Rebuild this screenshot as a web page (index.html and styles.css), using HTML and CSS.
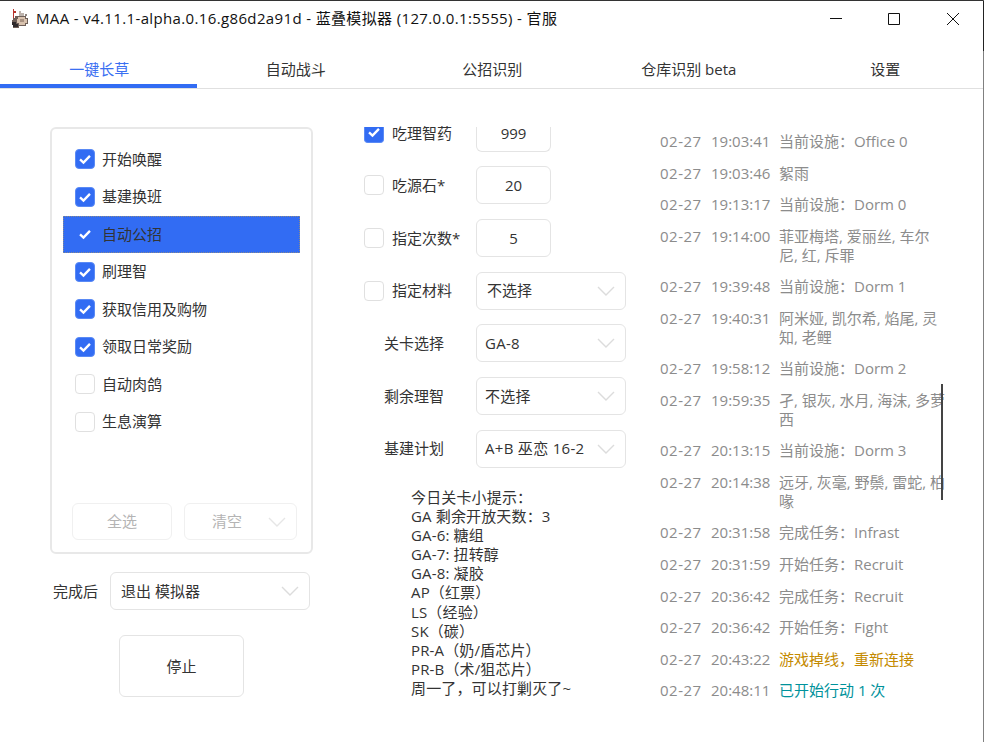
FILE: index.html
```html
<!DOCTYPE html>
<html lang="zh">
<head>
    <meta charset="UTF-8">
    <meta name="viewport" content="width=device-width, initial-scale=1.0">
    <title>MAA</title>
    <link rel="stylesheet" href="styles.css">
</head>
<body>
    <div class="window">
        <header class="titlebar">
            <svg class="app-icon" width="20" height="20" viewBox="0 0 20 20" shape-rendering="crispEdges">
                <path d="M5 8h11v2h2v6h-2v2H9v2H3v-4H2v-4h1v-2h2z" fill="#6e5f58"/>
                <path d="M8 9h7v2h2v4h-2v2H9v-2H7v-4h1z" fill="#d8c2ae"/>
                <path d="M10 11h4v3h-4z" fill="#a89282"/>
                <path d="M3 1h1v2h2v2H4v5H3z" fill="#b8352e"/>
                <path d="M9 3h2v2h3v3H9z" fill="#bdb3ac"/>
                <path d="M2 14h4v2h2v3H3v-2H2z" fill="#2f2a2c"/>
                <path d="M15 6h2v2h-2z" fill="#8f8580"/>
            </svg>
            <span class="app-title">MAA - v4.11.1-alpha.0.16.g86d2a91d - 蓝叠模拟器 (127.0.0.1:5555) - 官服</span>
            <div class="win-buttons">
                <svg width="12" height="12" viewBox="0 0 12 12"><path d="M0 5.5h12" stroke="#111" fill="none"/></svg>
                <svg width="12" height="12" viewBox="0 0 12 12"><path d="M.5.5h11v11H.5z" stroke="#111" fill="none"/></svg>
                <svg width="13" height="12" viewBox="0 0 13 12"><path d="M1 0l12 12M13 0L1 12" stroke="#111" fill="none"/></svg>
            </div>
        </header>

        <nav class="tabs">
            <a class="tab active">一键长草</a>
            <a class="tab">自动战斗</a>
            <a class="tab">公招识别</a>
            <a class="tab">仓库识别 beta</a>
            <a class="tab">设置</a>
        </nav>

        <main class="content">
            <section class="left">
                <div class="task-box">
                    <ul class="task-list">
                        <li class="task"><span class="check on"><svg viewBox="0 0 20 20"><path d="M4.5 10.5l3.8 3.5 7.2-7.5"/></svg></span>开始唤醒</li>
                        <li class="task"><span class="check on"><svg viewBox="0 0 20 20"><path d="M4.5 10.5l3.8 3.5 7.2-7.5"/></svg></span>基建换班</li>
                        <li class="task selected"><span class="check on"><svg viewBox="0 0 20 20"><path d="M4.5 10.5l3.8 3.5 7.2-7.5"/></svg></span>自动公招</li>
                        <li class="task"><span class="check on"><svg viewBox="0 0 20 20"><path d="M4.5 10.5l3.8 3.5 7.2-7.5"/></svg></span>刷理智</li>
                        <li class="task"><span class="check on"><svg viewBox="0 0 20 20"><path d="M4.5 10.5l3.8 3.5 7.2-7.5"/></svg></span>获取信用及购物</li>
                        <li class="task"><span class="check on"><svg viewBox="0 0 20 20"><path d="M4.5 10.5l3.8 3.5 7.2-7.5"/></svg></span>领取日常奖励</li>
                        <li class="task"><span class="check"></span>自动肉鸽</li>
                        <li class="task"><span class="check"></span>生息演算</li>
                    </ul>
                    <div class="task-actions">
                        <button class="btn-disabled select-all">全选</button>
                        <button class="btn-disabled clear">清空<svg class="chevron" viewBox="0 0 18 10"><path d="M1 1l8 8 8-8"/></svg></button>
                    </div>
                </div>
                <div class="after-row">
                    <span>完成后</span>
                    <div class="select after-select">退出 模拟器<svg class="chevron" viewBox="0 0 18 10"><path d="M1 1l8 8 8-8"/></svg></div>
                </div>
                <button class="stop">停止</button>
            </section>

            <section class="middle">
                <div class="option-list">
                    <div class="option first">
                        <span class="check on"><svg viewBox="0 0 20 20"><path d="M4.5 10.5l3.8 3.5 7.2-7.5"/></svg></span>
                        <span class="option-label">吃理智药</span>
                        <div class="input">999</div>
                    </div>
                    <div class="option">
                        <span class="check"></span>
                        <span class="option-label">吃源石*</span>
                        <div class="input">20</div>
                    </div>
                    <div class="option">
                        <span class="check"></span>
                        <span class="option-label">指定次数*</span>
                        <div class="input">5</div>
                    </div>
                    <div class="option">
                        <span class="check"></span>
                        <span class="option-label">指定材料</span>
                        <div class="select">不选择<svg class="chevron" viewBox="0 0 18 10"><path d="M1 1l8 8 8-8"/></svg></div>
                    </div>
                    <div class="option plain">
                        <span class="option-label">关卡选择</span>
                        <div class="select">GA-8<svg class="chevron" viewBox="0 0 18 10"><path d="M1 1l8 8 8-8"/></svg></div>
                    </div>
                    <div class="option plain">
                        <span class="option-label">剩余理智</span>
                        <div class="select">不选择<svg class="chevron" viewBox="0 0 18 10"><path d="M1 1l8 8 8-8"/></svg></div>
                    </div>
                    <div class="option plain">
                        <span class="option-label">基建计划</span>
                        <div class="select">A+B 巫恋 16-2<svg class="chevron" viewBox="0 0 18 10"><path d="M1 1l8 8 8-8"/></svg></div>
                    </div>
                </div>
                <div class="tips">今日关卡小提示：
GA 剩余开放天数：3
GA-6: 糖组
GA-7: 扭转醇
GA-8: 凝胶
AP（红票）
LS（经验）
SK（碳）
PR-A（奶/盾芯片）
PR-B（术/狙芯片）
周一了，可以打剿灭了~</div>
            </section>

            <section class="log">
                <div class="log-scroll">
                    <div class="log-row"><span class="log-date">02-27</span><span class="log-time">19:03:41</span><span class="log-text">当前设施：Office 0</span></div>
                    <div class="log-row"><span class="log-date">02-27</span><span class="log-time">19:03:46</span><span class="log-text">絮雨</span></div>
                    <div class="log-row"><span class="log-date">02-27</span><span class="log-time">19:13:17</span><span class="log-text">当前设施：Dorm 0</span></div>
                    <div class="log-row"><span class="log-date">02-27</span><span class="log-time">19:14:00</span><span class="log-text">菲亚梅塔, 爱丽丝, 车尔尼, 红, 斥罪</span></div>
                    <div class="log-row"><span class="log-date">02-27</span><span class="log-time">19:39:48</span><span class="log-text">当前设施：Dorm 1</span></div>
                    <div class="log-row"><span class="log-date">02-27</span><span class="log-time">19:40:31</span><span class="log-text">阿米娅, 凯尔希, 焰尾, 灵知, 老鲤</span></div>
                    <div class="log-row"><span class="log-date">02-27</span><span class="log-time">19:58:12</span><span class="log-text">当前设施：Dorm 2</span></div>
                    <div class="log-row"><span class="log-date">02-27</span><span class="log-time">19:59:35</span><span class="log-text">孑, 银灰, 水月, 海沫, 多萝西</span></div>
                    <div class="log-row"><span class="log-date">02-27</span><span class="log-time">20:13:15</span><span class="log-text">当前设施：Dorm 3</span></div>
                    <div class="log-row"><span class="log-date">02-27</span><span class="log-time">20:14:38</span><span class="log-text">远牙, 灰毫, 野鬃, 雷蛇, 柏喙</span></div>
                    <div class="log-row"><span class="log-date">02-27</span><span class="log-time">20:31:58</span><span class="log-text">完成任务：Infrast</span></div>
                    <div class="log-row"><span class="log-date">02-27</span><span class="log-time">20:31:59</span><span class="log-text">开始任务：Recruit</span></div>
                    <div class="log-row"><span class="log-date">02-27</span><span class="log-time">20:36:42</span><span class="log-text">完成任务：Recruit</span></div>
                    <div class="log-row"><span class="log-date">02-27</span><span class="log-time">20:36:42</span><span class="log-text">开始任务：Fight</span></div>
                    <div class="log-row warn"><span class="log-date">02-27</span><span class="log-time">20:43:22</span><span class="log-text">游戏掉线，重新连接</span></div>
                    <div class="log-row info"><span class="log-date">02-27</span><span class="log-time">20:48:11</span><span class="log-text">已开始行动 1 次</span></div>
                </div>
                <div class="scroll-thumb"></div>
            </section>
        </main>
    </div>
</body>
</html>
```
FILE: styles.css
```css
* {
    margin: 0;
    padding: 0;
    box-sizing: border-box;
}

body {
    width: 984px;
    height: 742px;
    overflow: hidden;
    background: #fff;
    color: #333;
    font-family: 'Open Sans', 'Noto Sans CJK SC', sans-serif;
    font-size: 15px;
    line-height: 19px;
}

.window {
    position: relative;
    height: 742px;
    border-top: 1px solid #333;
    border-right: 1px solid #808080;
    display: flex;
    flex-direction: column;
}

/* darker piece of the window edge beside the title bar */
.window::after {
    content: "";
    position: absolute;
    top: 0;
    right: -1px;
    width: 1px;
    height: 50px;
    background: #222;
}

.titlebar {
    height: 37px;
    display: flex;
    align-items: center;
    padding: 0 0 3px 10px;
    flex-shrink: 0;
}

.app-icon {
    margin-right: 6px;
}

.app-title {
    color: #111;
    font-size: 15px;
    letter-spacing: 0.36px;
    white-space: nowrap;
}

.win-buttons {
    margin: 2px 0 0 auto;
    display: flex;
    align-items: center;
    gap: 46px;
    padding-right: 24px;
}

.tabs {
    height: 51px;
    display: flex;
    border-bottom: 1px solid #e0e0e0;
    flex-shrink: 0;
}

.tab {
    width: 196.5px;
    height: 50px;
    display: flex;
    align-items: center;
    justify-content: center;
    padding: 16px 0 0 2px;
    border-bottom: 4px solid transparent;
}

.tab.active {
    color: #3a6ff2;
    border-bottom-color: #326cf3;
}

.content {
    flex: 1;
    position: relative;
    display: flex;
}

.left {
    width: 347px;
    padding: 38px 0 0 50px;
}

.task-box {
    width: 263px;
    height: 427px;
    border: 2px solid #e8e8e8;
    border-radius: 6px;
    padding: 11.5px 11px 0;
    display: flex;
    flex-direction: column;
}

.task-list {
    list-style: none;
}

.task {
    height: 37.5px;
    display: flex;
    align-items: center;
    padding-left: 12px;
}

.task.selected {
    background: #326cf3;
    outline: 1px dotted #8a8a8a;
    outline-offset: -1px;
}

.task.selected .check {
    background: none;
    border-color: transparent;
}

.check {
    width: 20px;
    height: 20px;
    border: 1px solid #e0e0e0;
    border-radius: 4px;
    margin-right: 7px;
    flex-shrink: 0;
    background: #fff;
}

.check.on {
    background: #326cf3;
    border-color: #5a8af5;
}

.check svg {
    display: block;
    width: 18px;
    height: 18px;
    fill: none;
    stroke: #fff;
    stroke-width: 2.6;
}

.task-actions {
    margin-top: auto;
    margin-bottom: 12px;
    display: flex;
    gap: 12px;
    padding-left: 9px;
}

.btn-disabled {
    height: 37px;
    border: 1px solid #f0f0f0;
    border-radius: 6px;
    background: #fff;
    color: #b4b4b4;
    font: inherit;
    display: flex;
    align-items: center;
}

.select-all {
    width: 100px;
    justify-content: center;
}

.clear {
    width: 113px;
    padding-left: 27px;
}

.chevron {
    width: 18px;
    height: 10px;
    margin-left: auto;
    fill: none;
    stroke: #dcdcdc;
    stroke-width: 1.4;
    flex-shrink: 0;
}

.clear .chevron {
    margin-right: 10px;
    stroke: #e6e6e6;
}

.after-row {
    width: 260px;
    margin-top: 18px;
    display: flex;
    align-items: center;
    padding-left: 3px;
    gap: 12px;
}

.select {
    height: 38px;
    width: 150px;
    border: 1px solid #e4e4e4;
    border-radius: 6px;
    display: flex;
    align-items: center;
    padding: 0 10px;
    background: #fff;
    white-space: nowrap;
}

.after-select {
    width: 200px;
}

.stop {
    display: block;
    width: 125px;
    height: 62px;
    margin: 25px 0 0 69px;
    border: 1px solid #e4e4e4;
    border-radius: 6px;
    background: #fff;
    color: #333;
    font: inherit;
}

.middle {
    width: 300px;
    position: relative;
    padding-top: 38px;
}

.option-list {
    height: 345px;
}

.option {
    height: 52.7px;
    display: flex;
    align-items: center;
    padding-left: 17px;
}

/* this row is scrolled partly out of view: its top edges are not shown */
.option.first {
    height: 25px;
    margin-bottom: 7px;
    align-items: flex-start;
    line-height: 12px;
}

.first .check {
    height: 16px;
    border-top: 0;
    border-radius: 0 0 4px 4px;
}

.first .check svg {
    margin-top: -4px;
}

.first .input {
    height: 25px;
    border-top: 0;
    border-radius: 0 0 6px 6px;
    align-items: flex-start;
}

.option .check {
    margin-right: 8px;
}

.option-label {
    width: 84px;
    white-space: nowrap;
}

.plain {
    padding-left: 37px;
}

.plain .option-label {
    width: 92px;
}

.plain .select {
    padding-left: 8px;
    letter-spacing: 0.3px;
}

.input {
    width: 75px;
    height: 38px;
    border: 1px solid #e4e4e4;
    border-radius: 6px;
    display: flex;
    align-items: center;
    justify-content: center;
    flex-shrink: 0;
}

.tips {
    margin: 16px 0 0 64px;
    white-space: pre-line;
    line-height: 19.1px;
    letter-spacing: 0.15px;
}

.log {
    flex: 1;
    position: relative;
    padding: 43px 30px 0 13px;
}

.log-row {
    display: grid;
    grid-template-columns: 46px 63px 1fr;
    column-gap: 5px;
    margin-bottom: 12.56px;
    color: #8c8c8c;
    line-height: 19px;
}

.log-date {
    letter-spacing: 0.5px;
    white-space: nowrap;
}

.log-time {
    white-space: nowrap;
}

.log-row.warn .log-text {
    color: #c48a00;
}

.log-row.info .log-text {
    color: #00929b;
}

.log-text {
    width: 168px;
}

.scroll-thumb {
    position: absolute;
    top: 295px;
    left: 294px;
    width: 2px;
    height: 116px;
    background: #444;
}
```
